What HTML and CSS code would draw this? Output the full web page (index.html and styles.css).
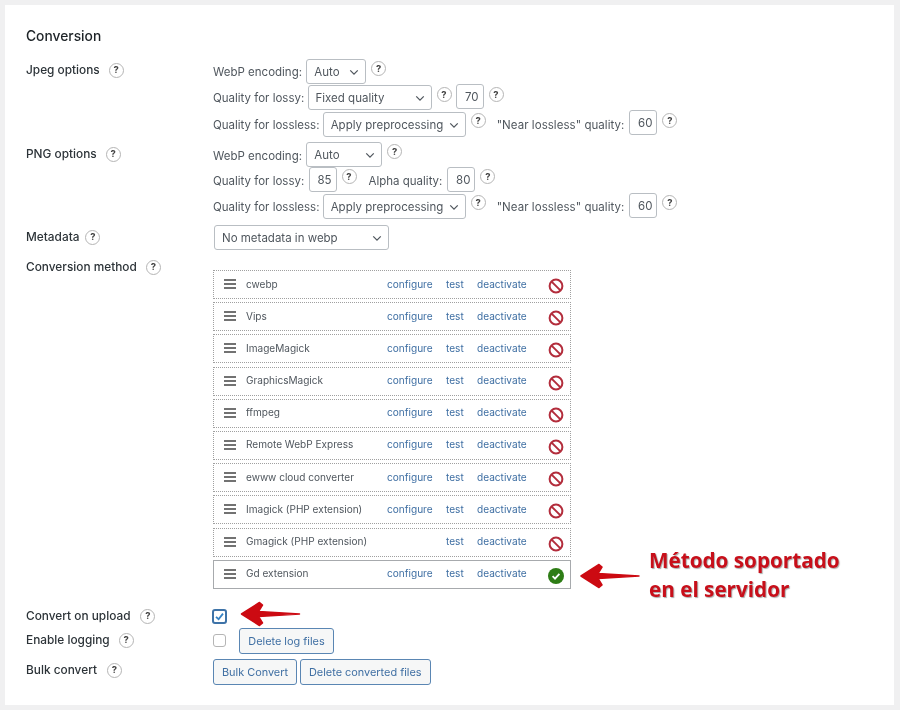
FILE: index.html
```html
<!DOCTYPE html>
<html lang="en">
<head>
<meta charset="utf-8">
<title>Conversion</title>
<link rel="stylesheet" href="styles.css">
</head>
<body>
<svg class="defs" width="0" height="0">
  <symbol id="chev" viewBox="0 0 12 8"><path d="M1.5 1.5 6 6l4.5-4.5" fill="none" stroke="#50575e" stroke-width="1.5"/></symbol>
  <symbol id="ham" viewBox="0 0 12 10"><path d="M0 1h12M0 5h12M0 9h12" stroke="#444" stroke-width="1.4"/></symbol>
  <symbol id="no" viewBox="0 0 16 16"><circle cx="8" cy="8" r="6.4" fill="#fff" stroke="#b32d3c" stroke-width="2"/><path d="M3.6 3.6l8.8 8.8" stroke="#b32d3c" stroke-width="2"/></symbol>
  <symbol id="ok" viewBox="0 0 16 16"><circle cx="8" cy="8" r="8" fill="#2e7d16"/><path d="M4.6 8.2l2.4 2.4 4.4-4.8" fill="none" stroke="#fff" stroke-width="1.8"/></symbol>
</svg>
<main class="panel">
  <h2 class="title">Conversion</h2>

  <section class="row row-jpeg">
    <div class="label">Jpeg options <span class="help help-l1">?</span></div>
    <div class="field">
      <div class="line l-h26">WebP encoding: <span class="select w60">Auto<svg class="chev"><use href="#chev"/></svg></span><span class="help">?</span></div>
      <div class="line l-h27">Quality for lossy: <span class="select w124">Fixed quality<svg class="chev"><use href="#chev"/></svg></span><span class="help">?</span><input class="num up1" value="70" aria-label="Quality"><span class="help">?</span></div>
      <div class="line l-h27">Quality for lossless: <span class="select w143">Apply preprocessing<svg class="chev"><use href="#chev"/></svg></span><span class="help hl3">?</span><span class="near">"Near lossless" quality:</span><input class="num up2" value="60" aria-label="Near lossless quality"><span class="help hl3">?</span></div>
    </div>
  </section>

  <section class="row row-png">
    <div class="label">PNG options <span class="help help-l1">?</span></div>
    <div class="field">
      <div class="line l-h25 low1">WebP encoding: <span class="select w76">Auto<svg class="chev"><use href="#chev"/></svg></span><span class="help">?</span></div>
      <div class="line l-h27 low2">Quality for lossy: <input class="num" value="85" aria-label="Quality"><span class="help">?</span><span class="alpha">Alpha quality:</span><input class="num" value="80" aria-label="Alpha quality"><span class="help">?</span></div>
      <div class="line l-h27">Quality for lossless: <span class="select w143">Apply preprocessing<svg class="chev"><use href="#chev"/></svg></span><span class="help hl3">?</span><span class="near">"Near lossless" quality:</span><input class="num up1" value="60" aria-label="Near lossless quality"><span class="help hl3">?</span></div>
    </div>
  </section>

  <section class="row row-meta">
    <div class="label">Metadata <span class="help help-l3">?</span></div>
    <div class="field"><span class="select w175">No metadata in webp<svg class="chev"><use href="#chev"/></svg></span></div>
  </section>

  <section class="row row-method">
    <div class="label">Conversion method <span class="help help-l1">?</span></div>
    <div class="field methods">
      <div class="method"><svg class="ham"><use href="#ham"/></svg><span class="name">cwebp</span><a>configure</a><a>test</a><a>deactivate</a><svg class="st"><use href="#no"/></svg></div>
      <div class="method"><svg class="ham"><use href="#ham"/></svg><span class="name">Vips</span><a>configure</a><a>test</a><a>deactivate</a><svg class="st"><use href="#no"/></svg></div>
      <div class="method"><svg class="ham"><use href="#ham"/></svg><span class="name">ImageMagick</span><a>configure</a><a>test</a><a>deactivate</a><svg class="st"><use href="#no"/></svg></div>
      <div class="method"><svg class="ham"><use href="#ham"/></svg><span class="name">GraphicsMagick</span><a>configure</a><a>test</a><a>deactivate</a><svg class="st"><use href="#no"/></svg></div>
      <div class="method"><svg class="ham"><use href="#ham"/></svg><span class="name">ffmpeg</span><a>configure</a><a>test</a><a>deactivate</a><svg class="st"><use href="#no"/></svg></div>
      <div class="method"><svg class="ham"><use href="#ham"/></svg><span class="name">Remote WebP Express</span><a>configure</a><a>test</a><a>deactivate</a><svg class="st"><use href="#no"/></svg></div>
      <div class="method"><svg class="ham"><use href="#ham"/></svg><span class="name">ewww cloud converter</span><a>configure</a><a>test</a><a>deactivate</a><svg class="st"><use href="#no"/></svg></div>
      <div class="method"><svg class="ham"><use href="#ham"/></svg><span class="name">Imagick (PHP extension)</span><a>configure</a><a>test</a><a>deactivate</a><svg class="st"><use href="#no"/></svg></div>
      <div class="method"><svg class="ham"><use href="#ham"/></svg><span class="name wide">Gmagick (PHP extension)</span><a>test</a><a>deactivate</a><svg class="st"><use href="#no"/></svg></div>
      <div class="method active"><svg class="ham"><use href="#ham"/></svg><span class="name">Gd extension</span><a>configure</a><a>test</a><a>deactivate</a><svg class="st"><use href="#ok"/></svg></div>
    </div>
  </section>

  <section class="row row-upload">
    <div class="label">Convert on upload <span class="help help-l2">?</span></div>
    <div class="field"><span class="check checked"><svg viewBox="0 0 12 12"><path d="M2.2 6.4 5 9l4.8-6.2" fill="none" stroke="#3582c4" stroke-width="2"/></svg></span></div>
  </section>

  <section class="row row-log">
    <div class="label">Enable logging <span class="help help-l1">?</span></div>
    <div class="field fbtn"><span class="check"></span><button class="btn btn-log">Delete log files</button></div>
  </section>

  <section class="row row-bulk">
    <div class="label">Bulk convert <span class="help help-l2">?</span></div>
    <div class="field fbtn"><button class="btn btn-bulk">Bulk Convert</button><button class="btn">Delete converted files</button></div>
  </section>

  <svg class="arrow arrow-a" viewBox="0 0 60 26"><path d="M1 13 19 1.500l3 2.500-4 6.500 41 2.500-41 2.500 4 6.500-3 2.500z" fill="#cc0a12" stroke="#cc0a12" stroke-width="1.500" stroke-linejoin="round"/></svg>
  <svg class="arrow arrow-b" viewBox="0 0 60 26"><path d="M1 13 19 1.500l3 2.500-4 6.500 41 2.500-41 2.500 4 6.500-3 2.500z" fill="#cc0a12" stroke="#cc0a12" stroke-width="1.500" stroke-linejoin="round"/></svg>
  <p class="note">Método soportado<br>en el servidor</p>
</main>
</body>
</html>
```
FILE: styles.css
```css
* { box-sizing: border-box; }
html, body { margin: 0; }
body {
  width: 900px;
  height: 710px;
  background: #f0f0f1;
  padding: 5px 6px 5px 5px;
  font-family: Inter, "Liberation Sans", sans-serif;
  font-size: 11.5px;
  color: #50575e;
  overflow: hidden;
}
.defs { position: absolute; }
.panel {
  position: relative;
  width: 889px;
  height: 700px;
  background: #fff;
  padding: 22px 0 0 21px;
  filter: blur(0.3px);
}
.title {
  margin: 0;
  height: 31px;
  font-size: 13.8px;
  line-height: 18px;
  font-weight: 500;
  color: #1d2327;
}
.row { display: grid; grid-template-columns: 187px 1fr; }
.label {
  display: flex;
  align-items: center;
  height: 16px;
  font-size: 11.85px;
  font-weight: 500;
  line-height: 16px;
  color: #2c3338;
  white-space: nowrap;
}
.help {
  display: inline-flex;
  align-items: center;
  justify-content: center;
  flex: none;
  width: 15px;
  height: 15px;
  border: 1px solid #b5b5b5;
  border-radius: 50%;
  background: #fff;
  font-size: 9.5px;
  font-weight: 700;
  color: #444;
  line-height: 1;
}
.help-l1 { margin-left: 9px; }
.help-l2 { margin-left: 10px; }
.help-l3 { margin-left: 6px; }
.line { display: flex; align-items: flex-start; white-space: pre; line-height: 26px; }
.line.low1 { line-height: 28px; }
.line.low2 { line-height: 29px; }
.line > .help { margin: 2px 0 0 5px; }
.line > .help.hl3 { margin-top: 1px; }
.l-h25 { height: 25px; }
.l-h26 { height: 26px; }
.l-h27 { height: 27px; }
.select {
  display: inline-flex;
  align-items: center;
  justify-content: space-between;
  height: 25px;
  margin-left: 1px;
  padding: 1px 6px 0 7px;
  border: 1px solid #b9bec3;
  border-radius: 3px;
  background: #fff;
  color: #50575e;
  line-height: 23px;
}
.chev { width: 10px; height: 7px; flex: none; }
.w60 { width: 60px; }
.w76 { width: 76px; }
.w124 { width: 124px; margin-left: 0; }
.w143 { width: 143px; margin-left: 0; }
.w175 { width: 175px; }
.num {
  width: 28px;
  height: 25px;
  margin: 0 0 0 1px;
  padding: 1px 4px 0 0;
  border: 1px solid #b9bec3;
  border-radius: 3px;
  background: #fff;
  color: #50575e;
  font: inherit;
  text-align: right;
}
.help + .num { margin-left: 4px; }
.alpha + .num, .near + .num { margin-left: 5px; }
.num.up1 { margin-top: -1px; }
.num.up2 { margin-top: -2px; }
.near { margin-left: 11px; letter-spacing: 0.05px; }
.alpha { margin-left: 12px; }
.row-jpeg { height: 84px; padding-top: 1px; }
.row-jpeg .label { margin-top: 3px; }
.row-png { height: 83px; }
.row-png .label { margin-top: 4px; }
.row-meta { height: 34px; }
.row-meta .label { margin-top: 4px; }
.row-method { height: 350px; }
.methods { margin-top: 11px; }
.method {
  display: grid;
  grid-template-columns: 22px 141px 59px 31px 71px 16px;
  align-items: center;
  width: 358px;
  height: 29px;
  margin-bottom: 3.2px;
  padding: 0 0 2px 10px;
  border: 1px dotted #a0a0a0;
  color: #50575e;
  font-size: 10.05px;
}
.method a { color: #3f6fa3; font-size: 10.1px; }
.name.wide { grid-column: span 2; }
.ham { width: 12px; height: 10px; margin-top: 1px; }
.st { width: 16px; height: 16px; margin-top: 5px; }
.method.active { border: 1px solid #a7aaad; }
.row-upload { height: 19px; }
.row-upload .label { margin-top: -1px; }
.row-log { height: 31px; }
.row-bulk { height: 30px; }
.row-log .label { margin-top: 4px; }
.row-bulk .label { margin-top: 3px; }
.check {
  display: block;
  flex: none;
  width: 13px;
  height: 13px;
  margin-top: 6px;
  border: 1px solid #b5b5b5;
  border-radius: 3px;
  background: #fff;
}
.check svg { display: block; width: 11px; height: 11px; }
.check.checked { width: 15px; height: 15px; margin: 0 0 0 -1px; border: 2px solid #3e73a8; }
.fbtn { display: flex; align-items: flex-start; gap: 3px; }
.btn {
  height: 26px;
  padding: 0 8px;
  border: 1px solid #5a86b3;
  border-radius: 3px;
  background: #f6f7f7;
  color: #3f6fa3;
  font: inherit;
  font-size: 10.9px;
}
.btn-log { width: 95px; margin-left: 10px; padding: 0; }
.btn-bulk { width: 84px; padding: 0; }
.arrow { position: absolute; }
.arrow-a { left: 575px; top: 558px; width: 60px; height: 26px; }
.arrow-b { left: 235px; top: 596px; width: 61px; height: 26px; }
.note {
  position: absolute;
  left: 644px;
  top: 541px;
  margin: 0;
  font-family: "Open Sans", sans-serif;
  font-size: 20.7px;
  font-weight: 700;
  line-height: 29px;
  color: #c80f1a;
  text-shadow: 1px 1px 1px #aaa;
}
```
